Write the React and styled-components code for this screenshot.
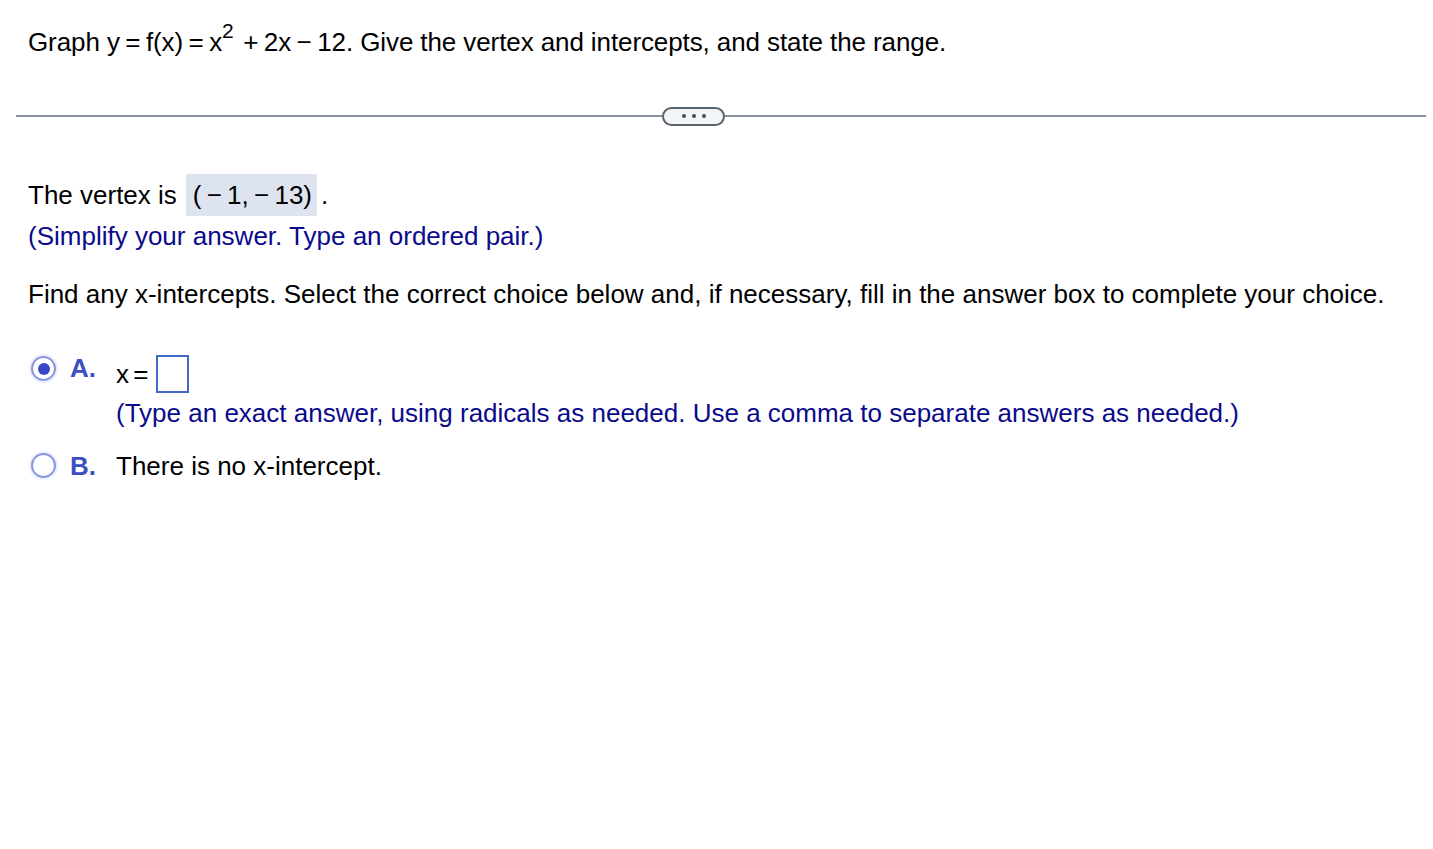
import React from 'react'
import styled, { createGlobalStyle } from 'styled-components'

const GlobalStyle = createGlobalStyle`
  body {
    margin: 0;
    background: #fff;
    font-family: "Liberation Sans", Arial, sans-serif;
    color: #000;
  }
`

const Page = styled.div`
  padding: 0 7px 0 16px;
  font-size: 26px;
`

const Question = styled.div`
  padding: 27px 12px 0 12px;
  height: 106px;
  box-sizing: border-box;
  line-height: 30px;
  letter-spacing: -0.1px;
`

const Math = styled.span`
  word-spacing: -1.6px;
`

const Sup = styled.sup`
  font-size: 21px;
  vertical-align: 0;
  position: relative;
  top: -13px;
  margin-right: 4px;
`

const Divider = styled.div`
  display: flex;
  align-items: center;
  height: 20px;

  &::before, &::after {
    content: '';
    height: 2px;
    background: #8a929c;
  }
  &::before {
    width: 646px;
  }
  &::after {
    flex: 1;
  }
`

const MorePill = styled.button`
  width: 63px;
  height: 19px;
  border: 2px solid #59636e;
  border-radius: 10px;
  background: #f3f4f6;
  display: flex;
  align-items: center;
  justify-content: center;
  gap: 6px;
  padding: 0;
`

const Dot = styled.span`
  width: 4px;
  height: 4px;
  border-radius: 50%;
  background: #444c56;
`

const Body = styled.div`
  padding: 48px 12px 0 12px;
`

const Line = styled.div`
  display: flex;
  align-items: center;
  line-height: 30px;
`

const Answer = styled.span`
  display: inline-flex;
  align-items: center;
  height: 42px;
  padding: 0 5px 0 7px;
  margin-left: 9px;
  margin-right: 4px;
  background: #dde4ef;
  word-spacing: -2px;
`

const Hint = styled.div`
  color: #0a0a8c;
  line-height: 30px;
  margin-top: ${p => p.$top || 0}px;
`

const Instruction = styled.div`
  margin-top: 28px;
  line-height: 30px;
`

const Choices = styled.div`
  margin-top: 46px;
  display: flex;
  flex-direction: column;
  gap: 23px;
`

const Choice = styled.div`
  display: grid;
  grid-template-columns: 42px 46px 1fr;
  align-items: start;
`

const Radio = styled.span`
  width: 25px;
  height: 25px;
  box-sizing: border-box;
  border-radius: 50%;
  border: 2.5px solid #8796de;
  box-shadow: 0 0 1px 2px #eceffb;
  margin-left: 3px;
  margin-top: ${p => (p.$checked ? 1 : 2)}px;
  display: flex;
  align-items: center;
  justify-content: center;

  &::after {
    content: '';
    width: 12px;
    height: 12px;
    border-radius: 50%;
    background: #3848c4;
    display: ${p => (p.$checked ? 'block' : 'none')};
  }
`

const Letter = styled.span`
  font-weight: bold;
  color: #3b50c0;
  line-height: 30px;
  margin-top: ${p => p.$top || 0}px;
`

const ChoiceBody = styled.div`
  display: flex;
  flex-direction: column;
  line-height: 30px;
`

const Equation = styled.div`
  display: flex;
  align-items: center;
  gap: 8px;
  word-spacing: -3px;
`

const InputBox = styled.span`
  display: inline-block;
  width: 33px;
  height: 38px;
  box-sizing: border-box;
  border: 2px solid #4169c8;
  background: #fff;
`

export default function App() {
  return (
    <>
      <GlobalStyle />
      <Page>
        <Question>
          Graph <Math>y = f(x) = x<Sup>2</Sup> + 2x − 12.</Math> Give the vertex and intercepts, and state the range.
        </Question>

        <Divider>
          <MorePill aria-label="more">
            <Dot /><Dot /><Dot />
          </MorePill>
        </Divider>

        <Body>
          <Line>
            The vertex is
            <Answer>( − 1, − 13)</Answer>.
          </Line>
          <Hint $top={5}>(Simplify your answer. Type an ordered pair.)</Hint>

          <Instruction>
            Find any x-intercepts. Select the correct choice below and, if necessary, fill in the answer box to complete your choice.
          </Instruction>

          <Choices>
            <Choice>
              <Radio $checked />
              <Letter $top={-2}>A.</Letter>
              <ChoiceBody>
                <Equation>
                  <span>x =</span>
                  <InputBox />
                </Equation>
                <Hint $top={5}>
                  (Type an exact answer, using radicals as needed. Use a comma to separate answers as needed.)
                </Hint>
              </ChoiceBody>
            </Choice>
            <Choice>
              <Radio />
              <Letter>B.</Letter>
              <ChoiceBody>
                <span>There is no x-intercept.</span>
              </ChoiceBody>
            </Choice>
          </Choices>
        </Body>
      </Page>
    </>
  )
}
